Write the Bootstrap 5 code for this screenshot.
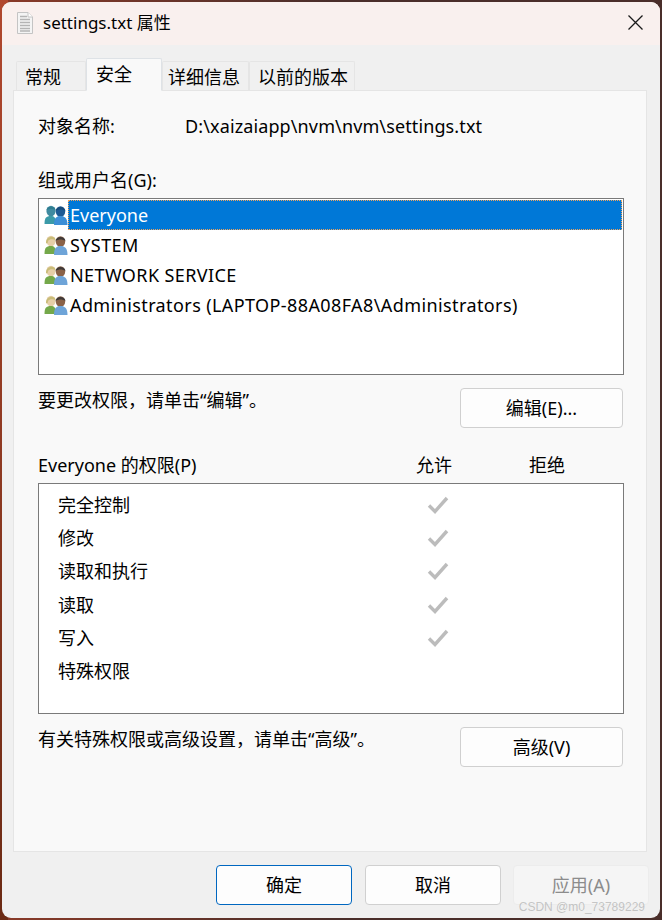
<!DOCTYPE html>
<html lang="zh">
<head>
<meta charset="utf-8">
<title>settings.txt 属性</title>
<link rel="stylesheet" href="https://cdn.jsdelivr.net/npm/bootstrap@5.3.0/dist/css/bootstrap.min.css">
<style>
html,body{margin:0;height:920px;overflow:hidden;background:#4a2a26;}
body{font-family:"Noto Sans","Noto Sans CJK SC",sans-serif;font-size:18px;color:#000;line-height:24px;}
.shell{height:920px;padding:2px;background:linear-gradient(180deg,#b0482e,#6b2a14) left top/8px 100% no-repeat,linear-gradient(90deg,#8a3a28 0,#4a2e2a 50%,#4a2e2a 100%);}
.dlg{height:916px;border-radius:9px;background:#f0f0f0;overflow:hidden;position:relative;display:flex;flex-direction:column;}
.cap{height:43px;flex:none;background:#f9f0ee;padding:0 17px 2px 15px;}
.capt{font-size:17px;margin-left:10px;}
.body-wrap{flex:1;padding:16px 13px 0 11px;display:flex;flex-direction:column;}
.tabs-strip{height:29px;flex:none;border:0;padding-left:3px;align-items:flex-end;position:relative;z-index:1;flex-wrap:nowrap;}
.tabs-strip .nav-link{height:29px;padding:0 0 0 8px;border:1px solid #e5e5e5;border-bottom:0;border-radius:2px 2px 0 0;margin:0;color:#000;background:#f0f0f0;font-size:18px;line-height:30px;text-align:left;}
.tabs-strip .nav-link.t1{width:70px;}
.tabs-strip .nav-link.t2{width:76px;height:33px;background:#f9f9f9;padding:1px 0 0 9px;line-height:29px;margin-bottom:-1px;border-bottom:1px solid #f9f9f9;}
.tabs-strip .nav-link.t3{width:87px;padding-left:5px;}
.tabs-strip .nav-link.t4{width:106px;}
.pane{height:762px;flex:none;background:#f9f9f9;border:1px solid #e5e5e5;padding:23px 23px 0 24px;}
.objrow{height:24px;}
.objlbl{width:147px;flex:none;}
.objval{letter-spacing:.12px;}
.grplbl{margin-top:30px;height:24px;}
.box{background:#fff;border:1px solid #7a7a7a;margin-right:-1px;}
.usrbox{height:177px;margin-top:6px;padding:1px 1px 0 5px;}
.usr{height:30px;align-items:center;}
.usr svg{flex:none;}
.usrtxt{flex:1;height:30px;line-height:30px;padding-left:2px;white-space:nowrap;letter-spacing:.4px;}
.usr.picked .usrtxt{background:#0078d7;color:#fff;outline:1px dotted #f3a45c;outline-offset:-1px;letter-spacing:0;}
.actrow{height:40px;margin-top:13px;}
.actrow .msg{margin-top:-16px;}
.wbtn{width:163px;height:40px;padding:0;background:#fdfdfd;border:1px solid #d0d0d0;border-radius:4px;color:#000;font-size:18px;line-height:24px;}
.permhead{margin-top:25px;height:24px;}
.permhead .pn{flex:1;}
.permhead .pa{width:36px;margin-right:77px;}
.permhead .pd{width:36px;margin-right:58px;}
.permbox{height:231px;margin-top:6px;padding:8px 0 0 19px;}
.prow{height:33.2px;line-height:26px;}
.prow .pl{width:369px;flex:none;}
.prow svg{display:block;margin-top:4px;}
.footer{height:64px;flex:none;padding-top:13px;margin-right:-2px;gap:13px;}
.fbtn{width:136px;height:40px;padding:0;border:1px solid #d0d0d0;background:#fdfdfd;border-radius:4px;color:#000;font-size:18px;line-height:24px;}
.fbtn.go{border-color:#0067c0;}
.fbtn.off,.fbtn.off:disabled{background:#f5f5f5;border-color:#ececec;color:#8c8c8c;opacity:1;margin-left:-1px;}
.wm{position:absolute;right:15px;bottom:3px;font-family:"Liberation Sans",sans-serif;font-size:12px;line-height:16px;color:rgba(110,110,110,.36);}
</style>
</head>
<body>
<svg width="0" height="0" class="d-none">
  <symbol id="grpblue" viewBox="0 0 24 20">
    <ellipse cx="7" cy="6" rx="4.600" ry="5.200" fill="#3f8aa0"/><path d="M2.500 5C3 1 11 .5 11.500 5c-2-1-6-1.500-9 0z" fill="#2f7d90"/>
    <path d="M.5 19c0-6 1.500-8 6.500-8 3 0 5 1 5 8z" fill="#3b9aa8"/>
    <ellipse cx="16.500" cy="6.500" rx="4.700" ry="5.300" fill="#1d5a94"/><path d="M11.500 6C12 1 21 .5 21.500 6c-3-2-7-2-10 0z" fill="#174a7a"/>
    <path d="M10 20c0-6.500 2-9 6.500-9s7 2.500 7 9z" fill="#3d8fd6"/>
  </symbol>
  <symbol id="grpuser" viewBox="0 0 24 20">
    <ellipse cx="7" cy="6" rx="4.600" ry="5.200" fill="#e6cfa8"/><path d="M2 8C1.500 1 11 -.5 11.500 5 9 3.500 5 4 4 6c0 2-1 3-2 2z" fill="#c9bc78"/>
    <path d="M.5 19c0-6 1.500-8 6.500-8 3 0 5 1 5 8z" fill="#74a84a"/>
    <ellipse cx="16.500" cy="6.500" rx="4.700" ry="5.300" fill="#8a6248"/><path d="M11.500 6C12 1 21 .5 21.500 6c-3-2-7-2-10 0z" fill="#3f3a38"/>
    <path d="M10 20c0-6.500 2-9 6.500-9s7 2.500 7 9z" fill="#6ea4d8"/>
  </symbol>
  <symbol id="chk" viewBox="0 0 22 18"><path d="M2 9.500l6 6L20 2" fill="none" stroke="#bcbcbc" stroke-width="3.400"/></symbol>
</svg>
<div class="shell">
<div class="dlg">
  <div class="cap d-flex align-items-center justify-content-between">
    <div class="d-flex align-items-center">
      <svg width="16" height="22" viewBox="0 0 16 22"><path d="M.5.500h10.500l4.500 4.500v16.500H.5z" fill="#f4f4f4" stroke="#c4c4c4"/><path d="M11 .5v4.500h4.500" fill="#fff" stroke="#c4c4c4"/><path d="M3 4.500h7M3 7.500h10M3 10.500h10M3 13.500h10M3 16.500h10M3 19h10" stroke="#b4b4b4" stroke-width="1.300"/></svg>
      <span class="capt">settings.txt 属性</span>
    </div>
    <svg width="15" height="15" viewBox="0 0 15 15"><path d="M.5.500l14 14M14.500.500l-14 14" stroke="#1a1a1a" stroke-width="1.300" fill="none"/></svg>
  </div>
  <div class="body-wrap">
    <ul class="nav nav-tabs tabs-strip">
      <li class="nav-item"><a class="nav-link t1" href="#">常规</a></li>
      <li class="nav-item"><a class="nav-link t2 active" href="#">安全</a></li>
      <li class="nav-item"><a class="nav-link t3" href="#">详细信息</a></li>
      <li class="nav-item"><a class="nav-link t4" href="#">以前的版本</a></li>
    </ul>
    <div class="pane">
      <div class="objrow d-flex"><div class="objlbl">对象名称:</div><div class="objval">D:\xaizaiapp\nvm\nvm\settings.txt</div></div>
      <div class="grplbl">组或用户名(G):</div>
      <div class="box usrbox">
        <div class="usr picked d-flex"><svg width="24" height="20"><use href="#grpblue"/></svg><div class="usrtxt">Everyone</div></div>
        <div class="usr d-flex"><svg width="24" height="20"><use href="#grpuser"/></svg><div class="usrtxt">SYSTEM</div></div>
        <div class="usr d-flex"><svg width="24" height="20"><use href="#grpuser"/></svg><div class="usrtxt">NETWORK SERVICE</div></div>
        <div class="usr d-flex"><svg width="24" height="20"><use href="#grpuser"/></svg><div class="usrtxt">Administrators (LAPTOP-88A08FA8\Administrators)</div></div>
      </div>
      <div class="actrow d-flex justify-content-between align-items-center">
        <div class="msg">要更改权限&#65292;请单击“编辑”。</div>
        <button class="btn wbtn" type="button">编辑(E)...</button>
      </div>
      <div class="permhead d-flex">
        <div class="pn">Everyone 的权限(P)</div><div class="pa">允许</div><div class="pd">拒绝</div>
      </div>
      <div class="box permbox">
        <div class="prow d-flex"><div class="pl">完全控制</div><svg width="22" height="18"><use href="#chk"/></svg></div>
        <div class="prow d-flex"><div class="pl">修改</div><svg width="22" height="18"><use href="#chk"/></svg></div>
        <div class="prow d-flex"><div class="pl">读取和执行</div><svg width="22" height="18"><use href="#chk"/></svg></div>
        <div class="prow d-flex"><div class="pl">读取</div><svg width="22" height="18"><use href="#chk"/></svg></div>
        <div class="prow d-flex"><div class="pl">写入</div><svg width="22" height="18"><use href="#chk"/></svg></div>
        <div class="prow d-flex"><div class="pl">特殊权限</div></div>
      </div>
      <div class="actrow d-flex justify-content-between align-items-center">
        <div class="msg">有关特殊权限或高级设置&#65292;请单击“高级”。</div>
        <button class="btn wbtn" type="button">高级(V)</button>
      </div>
    </div>
    <div class="footer d-flex justify-content-end">
      <button class="btn fbtn go" type="button">确定</button>
      <button class="btn fbtn" type="button">取消</button>
      <button class="btn fbtn off" type="button" disabled>应用(A)</button>
    </div>
  </div>
  <div class="wm">CSDN @m0_73789229</div>
</div>
</div>
</body>
</html>
